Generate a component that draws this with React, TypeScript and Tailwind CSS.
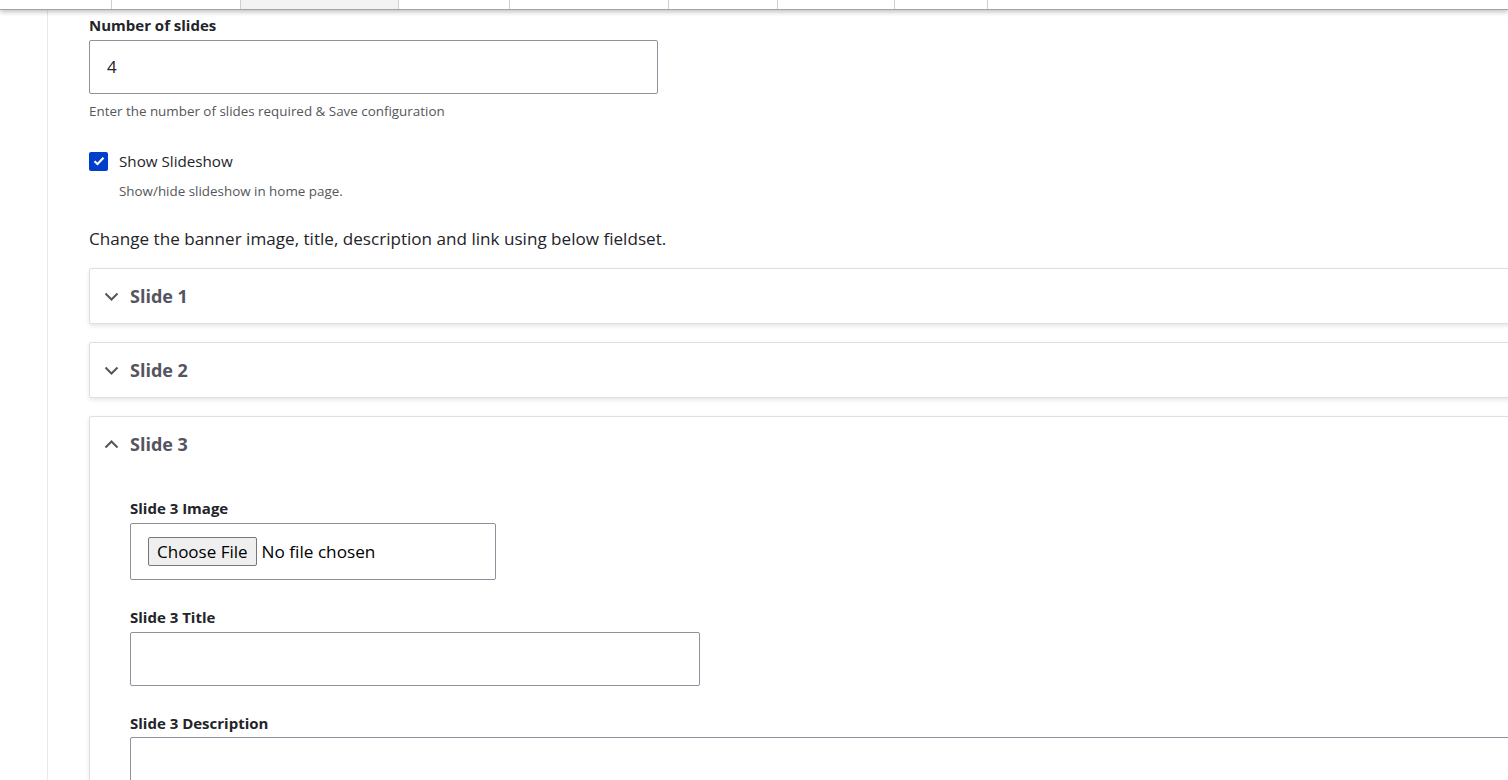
import React from "react";

const tabs = [
  { w: "w-[112px]", active: false },
  { w: "w-[129px]", active: false },
  { w: "w-[158px]", active: true },
  { w: "w-[111px]", active: false },
  { w: "w-[159px]", active: false },
  { w: "w-[109px]", active: false },
  { w: "w-[117px]", active: false },
  { w: "w-[93px]", active: false },
];

function Chevron({ up }: { up?: boolean }) {
  return (
    <svg width="15" height="9" viewBox="0 0 15 9" fill="none" className="shrink-0">
      <path
        d={up ? "M1.5 7.5 L7.5 1.5 L13.5 7.5" : "M1.5 1.5 L7.5 7.5 L13.5 1.5"}
        stroke="#545560"
        strokeWidth="2"
      />
    </svg>
  );
}

function SlideDetails({ n, open, children }: { n: number; open?: boolean; children?: React.ReactNode }) {
  return (
    <div className="w-[1460px] border border-[#dedfe4] rounded-[2px] bg-white shadow-[0_2px_4px_rgba(0,0,0,0.1)]">
      <div className="flex h-[54px] items-center gap-[11px] pl-[14px]">
        <Chevron up={open} />
        <span className="text-[18px] font-bold text-[#545560]">Slide {n}</span>
      </div>
      {children}
    </div>
  );
}

function Label({ children }: { children: React.ReactNode }) {
  return <div className="h-[20px] text-[15px] leading-[20px] font-bold text-[#232429]">{children}</div>;
}

export default function App() {
  return (
    <div className="h-[780px] w-[1508px] overflow-hidden bg-white font-['Open_Sans','Noto_Sans',sans-serif]">
      {/* top tabs strip */}
      <div className="relative z-10 flex h-[10px] border-b border-[#a3a3a3] bg-white shadow-[0_2px_5px_rgba(0,0,0,0.25)]">
        {tabs.map((t, i) => (
          <div key={i} className={`${t.w} h-full border-r border-[#cfcfcf] ${t.active ? "bg-[#f3f3f3]" : ""}`} />
        ))}
      </div>

      <div className="flex">
        <div className="w-[47px] shrink-0" />
        <div className="flex-1 border-l border-[#e9e9e9] pl-[41px] pt-[5px]">
          <Label>Number of slides</Label>
          <div className="mt-[5px] flex h-[54px] w-[569px] items-center rounded-[2px] border border-[#8e929c] pl-[17px] text-[17px] text-[#232429]">
            4
          </div>
          <p className="mt-[8px] h-[18px] text-[13.4px] leading-[18px] text-[#55565b]">
            Enter the number of slides required &amp; Save configuration
          </p>

          <div className="mt-[31px] flex h-[20px] items-center gap-[11px]">
            <span className="flex h-[19px] w-[19px] items-center justify-center rounded-[2px] bg-[#003ecc]">
              <svg width="12" height="10" viewBox="0 0 12 10" fill="none">
                <path d="M1.5 5.2 L4.5 8 L10.5 1.8" stroke="white" strokeWidth="2.2" />
              </svg>
            </span>
            <span className="text-[15.2px] text-[#232429]">Show Slideshow</span>
          </div>
          <p className="mt-[11px] ml-[30px] h-[18px] text-[13.4px] leading-[18px] text-[#55565b]">
            Show/hide slideshow in home page.
          </p>

          <p className="mt-[27px] h-[24px] text-[17.1px] leading-[24px] text-[#232429]">
            Change the banner image, title, description and link using below fieldset.
          </p>

          <div className="mt-[17px] flex flex-col gap-[18px]">
            <SlideDetails n={1} />
            <SlideDetails n={2} />
            <SlideDetails n={3} open>
              <div className="pl-[40px] pt-[27px] pb-[40px]">
                <Label>Slide 3 Image</Label>
                <div className="mt-[5px] flex h-[57px] w-[366px] items-center rounded-[2px] border border-[#8e929c] pl-[17px]">
                  <span className="flex h-[29px] items-center rounded-[2px] border border-[#767676] bg-[#efefef] px-[8px] text-[17px] text-black">
                    Choose File
                  </span>
                  <span className="ml-[5px] text-[17.2px] text-black">No file chosen</span>
                </div>

                <div className="mt-[27px]">
                  <Label>Slide 3 Title</Label>
                  <div className="mt-[5px] h-[54px] w-[570px] rounded-[2px] border border-[#8e929c]" />
                </div>

                <div className="mt-[27px]">
                  <Label>Slide 3 Description</Label>
                  <div className="mt-[4px] h-[120px] w-[1400px] rounded-[2px] border border-[#8e929c]" />
                </div>
              </div>
            </SlideDetails>
          </div>
        </div>
      </div>
    </div>
  );
}
